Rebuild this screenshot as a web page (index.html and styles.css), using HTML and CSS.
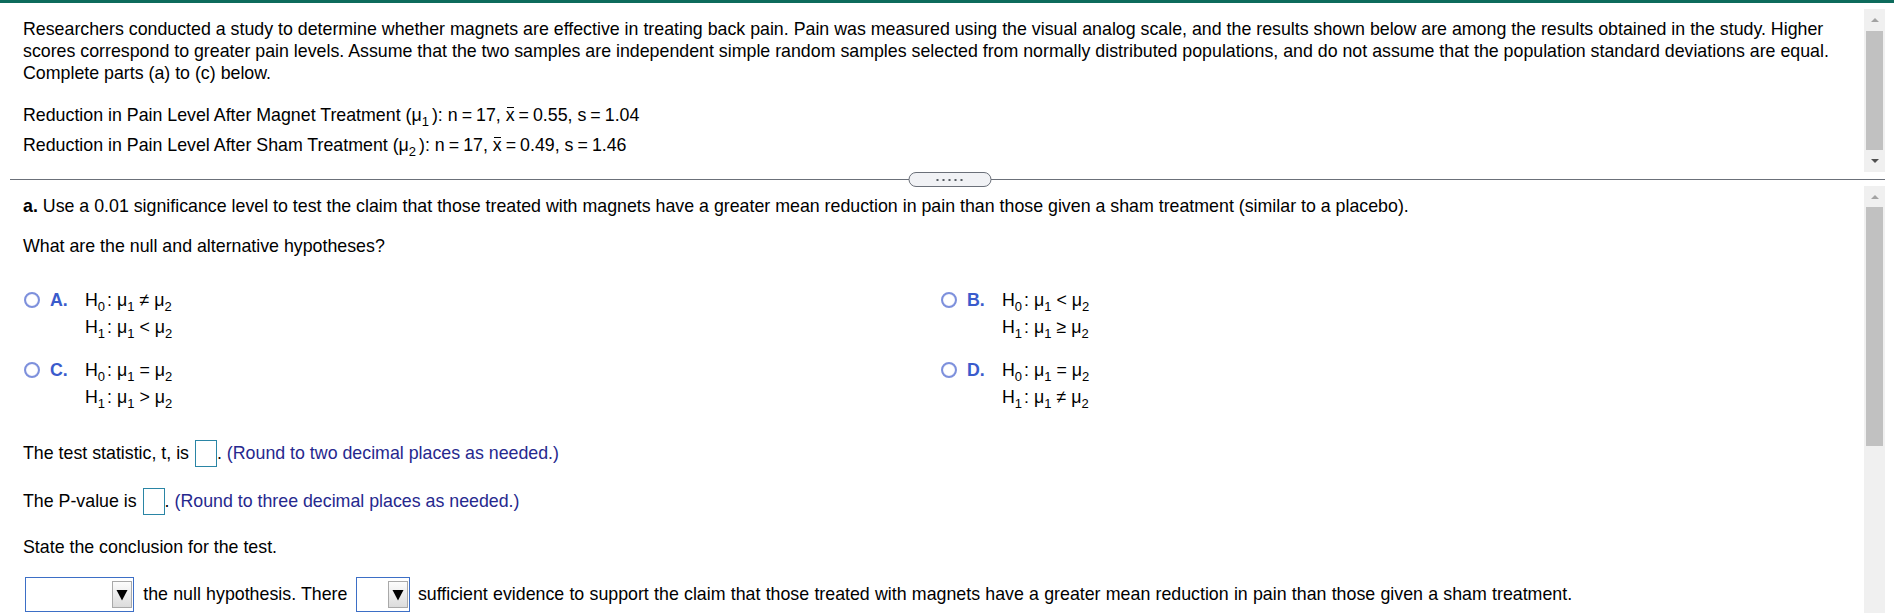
FILE: index.html
```html
<!DOCTYPE html>
<html lang="en">
<head>
<meta charset="utf-8">
<title>Magnet treatment hypothesis test</title>
<link rel="stylesheet" href="styles.css">
</head>
<body>
<div class="topbar"></div>

<div class="panel panel-top">
  <div class="content">
    <p class="intro">Researchers conducted a study to determine whether magnets are effective in treating back pain. Pain was measured using the visual analog scale, and the results shown below are among the results obtained in the study. Higher scores correspond to greater pain levels. Assume that the two samples are independent simple random samples selected from normally distributed populations, and do not assume that the population standard deviations are equal. Complete parts (a) to (c) below.</p>
    <div class="data">Reduction in Pain Level After Magnet Treatment (μ<sub class="dsub">1</sub>): n<span class="eq">=</span>17, <span class="xbar">x</span><span class="eq">=</span>0.55, s<span class="eq">=</span>1.04</div>
    <div class="data">Reduction in Pain Level After Sham Treatment (μ<sub class="dsub">2</sub>): n<span class="eq">=</span>17, <span class="xbar">x</span><span class="eq">=</span>0.49, s<span class="eq">=</span>1.46</div>
  </div>
  <div class="scrollbar sb-top">
    <div class="arrow up"></div>
    <div class="thumb"></div>
    <div class="arrow down"></div>
  </div>
</div>

<div class="divider">
  <div class="handle"><span></span><span></span><span></span><span></span><span></span></div>
</div>

<div class="panel panel-bottom">
  <div class="content">
    <p class="question"><b>a.</b> Use a 0.01 significance level to test the claim that those treated with magnets have a greater mean reduction in pain than those given a sham treatment (similar to a placebo).</p>
    <p class="ask">What are the null and alternative hypotheses?</p>

    <div class="options">
      <div class="option">
        <span class="radio"></span>
        <span class="letter">A.</span>
        <div class="math">
          <div class="mline">H<sub>0</sub><span class="colon">:</span> μ<sub>1</sub><span class="rel">≠</span>μ<sub>2</sub></div>
          <div class="mline">H<sub>1</sub><span class="colon">:</span> μ<sub>1</sub><span class="rel">&lt;</span>μ<sub>2</sub></div>
        </div>
      </div>
      <div class="option">
        <span class="radio"></span>
        <span class="letter">B.</span>
        <div class="math">
          <div class="mline">H<sub>0</sub><span class="colon">:</span> μ<sub>1</sub><span class="rel">&lt;</span>μ<sub>2</sub></div>
          <div class="mline">H<sub>1</sub><span class="colon">:</span> μ<sub>1</sub><span class="rel">≥</span>μ<sub>2</sub></div>
        </div>
      </div>
      <div class="option">
        <span class="radio"></span>
        <span class="letter">C.</span>
        <div class="math">
          <div class="mline">H<sub>0</sub><span class="colon">:</span> μ<sub>1</sub><span class="rel">=</span>μ<sub>2</sub></div>
          <div class="mline">H<sub>1</sub><span class="colon">:</span> μ<sub>1</sub><span class="rel">&gt;</span>μ<sub>2</sub></div>
        </div>
      </div>
      <div class="option">
        <span class="radio"></span>
        <span class="letter">D.</span>
        <div class="math">
          <div class="mline">H<sub>0</sub><span class="colon">:</span> μ<sub>1</sub><span class="rel">=</span>μ<sub>2</sub></div>
          <div class="mline">H<sub>1</sub><span class="colon">:</span> μ<sub>1</sub><span class="rel">≠</span>μ<sub>2</sub></div>
        </div>
      </div>
    </div>

    <p class="answer stat">The test statistic, t, is <span class="box"></span>. <span class="hint">(Round to two decimal places as needed.)</span></p>
    <p class="answer pval">The P-value is <span class="box"></span>. <span class="hint">(Round to three decimal places as needed.)</span></p>
    <p class="state">State the conclusion for the test.</p>
    <p class="dropline"><span class="select wide"><span class="btn"><svg width="12" height="12" viewBox="0 0 12 12"><polygon points="0.5,1 11.5,1 6,11.5" fill="#000"/></svg></span></span> the null hypothesis. There <span class="select narrow"><span class="btn"><svg width="12" height="12" viewBox="0 0 12 12"><polygon points="0.5,1 11.5,1 6,11.5" fill="#000"/></svg></span></span> sufficient evidence to support the claim that those treated with magnets have a greater mean reduction in pain than those given a sham treatment.</p>
  </div>
  <div class="scrollbar sb-bottom">
    <div class="arrow up"></div>
    <div class="thumb"></div>
  </div>
</div>
</body>
</html>
```

FILE: styles.css
```css
* { box-sizing: border-box; }
html, body { margin: 0; padding: 0; }
body {
  width: 1894px;
  height: 613px;
  overflow: hidden;
  background: #fff;
  font-family: "Liberation Sans", Arial, sans-serif;
  font-size: 17.8px;
  line-height: 22px;
  color: #000;
  display: flex;
  flex-direction: column;
}
p { margin: 0; }

.topbar { height: 3px; background: #0d6b5c; flex: none; }

.panel { display: flex; }
.panel-top { height: 176px; flex: none; overflow: hidden; }
.panel-bottom { flex: 1; min-height: 0; overflow: hidden; }
.content { flex: 1; min-width: 0; padding: 15px 0 0 23px; }

/* scrollbars */
.scrollbar {
  flex: none;
  width: 21px;
  margin: 6px 9px 0 7px;
  background: #f0f0f0;
  display: flex;
  flex-direction: column;
  align-items: center;
}
.sb-top { height: 163px; }
.arrow { width: 100%; height: 22px; display: flex; align-items: center; justify-content: center; }
.arrow::before { content: ""; border-left: 4px solid transparent; border-right: 4px solid transparent; }
.arrow.up::before { border-bottom: 4px solid #a3a3a3; }
.arrow.down::before { border-top: 4px solid #505050; }
.thumb { width: 17px; background: #c1c1c1; }
.sb-top .thumb { height: 119px; }
.sb-bottom .arrow.up { height: 21px; }
.sb-bottom .thumb { height: 239px; }

/* divider */
.divider {
  flex: none;
  height: 1px;
  margin: 0 9px 0 10px;
  background: #6b7079;
  position: relative;
}
.handle {
  position: absolute;
  left: calc(50% + 2px);
  top: -7px;
  transform: translateX(-50%);
  width: 83px;
  height: 15px;
  border: 1.5px solid #6b7079;
  border-radius: 8px;
  background: #f1f2f5;
  display: flex;
  justify-content: center;
  align-items: center;
  gap: 4px;
}
.handle span { width: 2px; height: 2px; background: #555a61; }

/* top panel */
.data { margin-top: 20px; }
.data + .data { margin-top: 8px; }
sub { font-size: 13px; line-height: 0; vertical-align: -5px; }
.dsub { margin-right: 3px; }
.eq { margin: 0 4px; }
.xbar { position: relative; }
.xbar::before {
  content: "";
  position: absolute;
  left: 1px;
  right: 1px;
  top: 2px;
  border-top: 1px solid #000;
}

/* bottom panel */
.ask { margin-top: 18px; }
.options {
  display: grid;
  grid-template-columns: 917px 917px;
  row-gap: 16px;
  margin-top: 30px;
}
.option { display: flex; align-items: flex-start; }
.radio {
  flex: none;
  width: 16px;
  height: 16px;
  margin: 5px 0 0 1px;
  border: 2px solid #7d90dc;
  border-radius: 50%;
  background: #fff;
  box-shadow: inset 0 0 1px #b9c3ee;
}
.letter {
  flex: none;
  width: 35px;
  margin-left: 10px;
  font-weight: bold;
  color: #3a5bcc;
  line-height: 27px;
}
.mline { line-height: 27px; white-space: nowrap; }
.colon { margin-left: 2px; }
.rel { margin: 0 5px 0 5px; }

.answer { line-height: 27px; }
.stat { margin-top: 29px; }
.pval { margin-top: 21px; }
.box {
  display: inline-block;
  width: 22px;
  height: 27px;
  border: 1px solid #2a85a5;
  vertical-align: top;
  margin-left: 1px;
}
.hint { color: #26288e; }
.state { margin-top: 21px; }

.dropline { margin-top: 19px; line-height: 35px; white-space: nowrap; word-spacing: 0.3px; }
.select {
  display: inline-flex;
  justify-content: flex-end;
  align-items: center;
  height: 35px;
  padding-right: 1px;
  border: 1px solid #3d6fc6;
  vertical-align: top;
  background: #fff;
}
.select.wide { width: 109px; margin: 0 4px 0 2px; }
.select.narrow { width: 54px; margin: 0 3px 0 3px; }
.btn {
  width: 20px;
  height: 27px;
  border: 1px solid #a9a9a9;
  background: linear-gradient(#fcfcfc, #dcdcdc);
  display: flex;
  align-items: center;
  justify-content: center;
}
.btn svg { display: block; }
```
